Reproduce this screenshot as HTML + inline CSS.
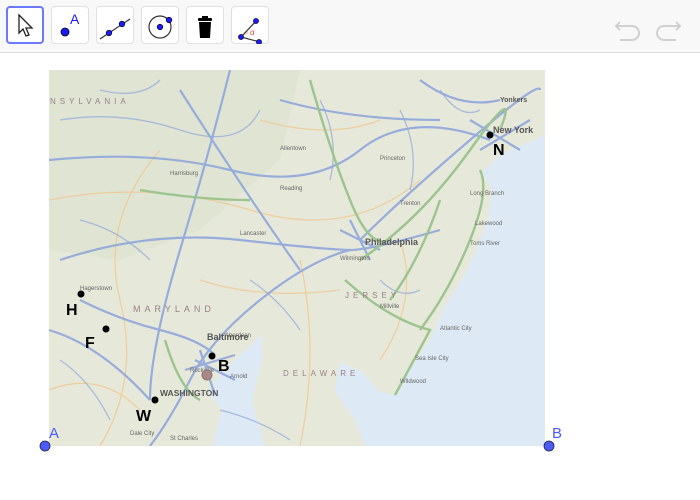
<!DOCTYPE html>
<html><head><style>
body{margin:0;width:700px;height:500px;background:#fff;overflow:hidden;font-family:"Liberation Sans",sans-serif;position:relative}
.tb{position:absolute;top:0;left:0;width:700px;height:52px;background:#f8f8f8;border-bottom:1px solid #ddd}
.btn{position:absolute;top:6px;width:38px;height:38px;border:1px solid #e0e0e0;border-radius:4px;background:#fff;box-sizing:border-box}
.sel{border:2px solid #6b78ff}
</style></head><body>
<div class="tb">
<div class="btn sel" style="left:6px"><svg width="38" height="38" viewBox="0 0 38 38" style="position:absolute;left:-2px;top:-2px"><path d="M13 9 L13 27 L17 23 L20 30 L23 29 L20 22 L26 22 Z" fill="#fff" stroke="#222" stroke-width="1.3"/></svg></div>
<div class="btn" style="left:51px"><svg width="38" height="38" viewBox="0 0 38 38" style="position:absolute;left:-1px;top:-1px"><circle cx="14" cy="26" r="4" fill="#1a1aff" stroke="#000" stroke-width=".8"/><text x="19" y="18" font-size="14" fill="#1a1aff" font-family="Liberation Sans">A</text></svg></div>
<div class="btn" style="left:96px"><svg width="38" height="38" viewBox="0 0 38 38" style="position:absolute;left:-1px;top:-1px"><line x1="4" y1="33" x2="34" y2="13" stroke="#333" stroke-width="1.2"/><circle cx="13" cy="27" r="2.8" fill="#1a1aff" stroke="#000" stroke-width=".6"/><circle cx="26" cy="18" r="2.8" fill="#1a1aff" stroke="#000" stroke-width=".6"/></svg></div>
<div class="btn" style="left:141px"><svg width="38" height="38" viewBox="0 0 38 38" style="position:absolute;left:-1px;top:-1px"><circle cx="19" cy="21" r="11" fill="none" stroke="#333" stroke-width="1.2"/><circle cx="19" cy="21" r="2.8" fill="#1a1aff" stroke="#000" stroke-width=".6"/><circle cx="28" cy="14" r="2.8" fill="#1a1aff" stroke="#000" stroke-width=".6"/></svg></div>
<div class="btn" style="left:186px"><svg width="38" height="38" viewBox="0 0 38 38" style="position:absolute;left:-1px;top:-1px"><rect x="12" y="12" width="14" height="3" rx="1" fill="#000"/><rect x="16" y="10" width="6" height="3" fill="#000"/><path d="M13 16 L25 16 L24 32 L14 32 Z" fill="#000"/></svg></div>
<div class="btn" style="left:231px"><svg width="38" height="38" viewBox="0 0 38 38" style="position:absolute;left:-1px;top:-1px"><path d="M10 31 L18 27 A8 8 0 0 0 15 24 Z" fill="#f3d9c6"/><line x1="10" y1="31" x2="25" y2="15" stroke="#333" stroke-width="1.2"/><line x1="10" y1="31" x2="29" y2="36" stroke="#333" stroke-width="1.2"/><text x="19" y="29" font-size="8" fill="#e44">α</text><circle cx="10" cy="31" r="2.6" fill="#1a1aff" stroke="#000" stroke-width=".6"/><circle cx="25" cy="15" r="2.6" fill="#1a1aff" stroke="#000" stroke-width=".6"/><circle cx="28" cy="36" r="2.6" fill="#1a1aff" stroke="#000" stroke-width=".6"/></svg></div>
<svg width="80" height="30" viewBox="0 0 80 30" style="position:absolute;left:612px;top:12px"><path d="M8 10 L4 14 L8 18 M4 14 L20 14 A7 7 0 0 1 20 28 L8 28" fill="none" stroke="#d0d0d0" stroke-width="2"/><path d="M64 10 L68 14 L64 18 M68 14 L52 14 A7 7 0 0 0 52 28 L64 28" fill="none" stroke="#d0d0d0" stroke-width="2"/></svg>
</div>
<svg width="700" height="500" style="position:absolute;left:0;top:0" viewBox="0 0 700 500">
<defs><clipPath id="c"><rect x="49" y="70" width="496" height="376"/></clipPath></defs>
<g clip-path="url(#c)">
<rect x="49" y="70" width="496" height="376" fill="#e6e9da"/>
<path d="M49 70 L300 70 L280 160 L200 230 L120 260 L49 250Z" fill="#dfe5d2"/>
<path d="M545 135 L500 155 L482 172 L492 190 L488 220 L476 250 L462 280 L445 305 L430 340 L410 370 L395 395 L380 392 L362 372 L340 362 L335 392 L355 420 L365 446 L545 446Z" fill="#dde9f4"/>
<path d="M222 372 L243 352 L262 335 L262 362 L252 400 L265 446 L212 446 L222 410 L208 392Z" fill="#dde9f4"/>
<g fill="none" stroke="#f0c890" stroke-width="1.3" opacity=".8">
<path d="M49 200 Q150 180 250 210 T420 180"/><path d="M100 446 Q140 380 120 300 T160 150"/><path d="M300 446 Q320 350 300 260"/><path d="M380 360 Q420 300 400 240"/><path d="M49 390 Q100 370 140 410"/><path d="M260 120 Q330 140 380 120"/><path d="M200 280 Q260 300 340 290"/>
</g>
<g fill="none" stroke="#8fa6dc" stroke-width="1.3" opacity=".7">
<path d="M60 120 Q120 110 180 130 T260 110"/><path d="M80 220 Q120 230 150 260"/><path d="M250 280 Q280 300 300 330"/><path d="M320 100 Q340 140 330 180"/><path d="M400 110 Q420 150 410 190"/><path d="M60 360 Q90 380 110 420"/><path d="M220 410 Q260 420 290 440"/><path d="M380 280 Q400 300 420 290"/><path d="M100 90 Q140 100 160 80"/><path d="M440 90 Q460 120 480 110"/>
</g>
<g fill="none" stroke="#8fa6dc" stroke-width="2.2" opacity=".9">
<path d="M49 160 Q150 150 230 170 T360 150 T490 140"/><path d="M60 260 Q150 230 240 240 T350 250 T440 230"/><path d="M80 300 Q120 320 160 330 T215 355"/><path d="M150 446 Q170 420 190 380 T260 300 T350 250"/><path d="M360 240 Q400 200 470 140 T540 90"/><path d="M230 70 Q210 150 180 250 T150 400"/><path d="M280 100 Q350 120 440 120"/><path d="M49 330 Q100 345 150 400"/><path d="M180 90 Q250 200 300 270"/><path d="M420 80 Q460 110 500 100"/><path d="M195 360 L235 380 M185 370 L235 355 M200 350 L215 395"/><path d="M340 230 L380 250 M350 220 L370 260"/><path d="M470 120 L520 150 M480 150 L530 120"/>
</g>
<g fill="none" stroke="#9cc48e" stroke-width="2.4">
<path d="M310 80 Q330 150 350 200 T390 240"/><path d="M360 260 Q420 220 470 150 T500 130"/><path d="M390 300 Q420 260 440 200"/><path d="M420 330 Q450 290 470 240 T480 170"/><path d="M140 190 Q200 200 250 200"/><path d="M165 340 Q180 390 200 400"/><path d="M345 280 Q390 320 430 330 L395 395"/>
</g>
<g font-size="6" fill="#666"><text x="280" y="150">Allentown</text><text x="170" y="175">Harrisburg</text><text x="280" y="190">Reading</text><text x="380" y="160">Princeton</text><text x="400" y="205">Trenton</text><text x="240" y="235">Lancaster</text><text x="470" y="195">Long Branch</text><text x="475" y="225">Lakewood</text><text x="470" y="245">Toms River</text><text x="440" y="330">Atlantic City</text><text x="415" y="360">Sea Isle City</text><text x="400" y="383">Wildwood</text><text x="380" y="308">Millville</text><text x="340" y="260">Wilmington</text><text x="80" y="290">Hagerstown</text><text x="225" y="337">Aberdeen</text><text x="190" y="372">Rockville</text><text x="230" y="378">Arnold</text><text x="130" y="435">Dale City</text><text x="170" y="440">St Charles</text></g>
<g font-size="6.5" fill="#9a7f8a" letter-spacing="4"><text x="133" y="312" font-size="9">MARYLAND</text><text x="283" y="376" font-size="8">DELAWARE</text><text x="345" y="298" font-size="8">JERSEY</text><text x="50" y="104" font-size="8">NSYLVANIA</text></g>
<g font-weight="bold" fill="#555" font-size="9"><text x="365" y="245">Philadelphia</text><text x="207" y="340">Baltimore</text><text x="160" y="396" font-size="8.5">WASHINGTON</text><text x="493" y="133">New York</text><text x="500" y="102" font-size="7">Yonkers</text></g>
</g>
<g font-weight="bold" font-size="16" fill="#000"><text x="493" y="155">N</text><text x="66" y="315">H</text><text x="85" y="348">F</text><text x="218" y="371">B</text><text x="136" y="421">W</text></g>
<g fill="#000"><circle cx="490" cy="135" r="3.5"/><circle cx="81" cy="294" r="3.5"/><circle cx="106" cy="329" r="3.5"/><circle cx="212" cy="356" r="3.5"/><circle cx="155" cy="400" r="3.5"/></g>
<circle cx="207" cy="375" r="5" fill="#a88" stroke="#877" />
<circle cx="45" cy="446" r="5" fill="#4a5cff" stroke="#223" stroke-width=".8"/><circle cx="549" cy="446" r="5" fill="#4a5cff" stroke="#223" stroke-width=".8"/>
<text x="49" y="438" fill="#4a5cff" font-size="15">A</text><text x="552" y="438" fill="#4a5cff" font-size="15">B</text>
</svg>
</body></html>
